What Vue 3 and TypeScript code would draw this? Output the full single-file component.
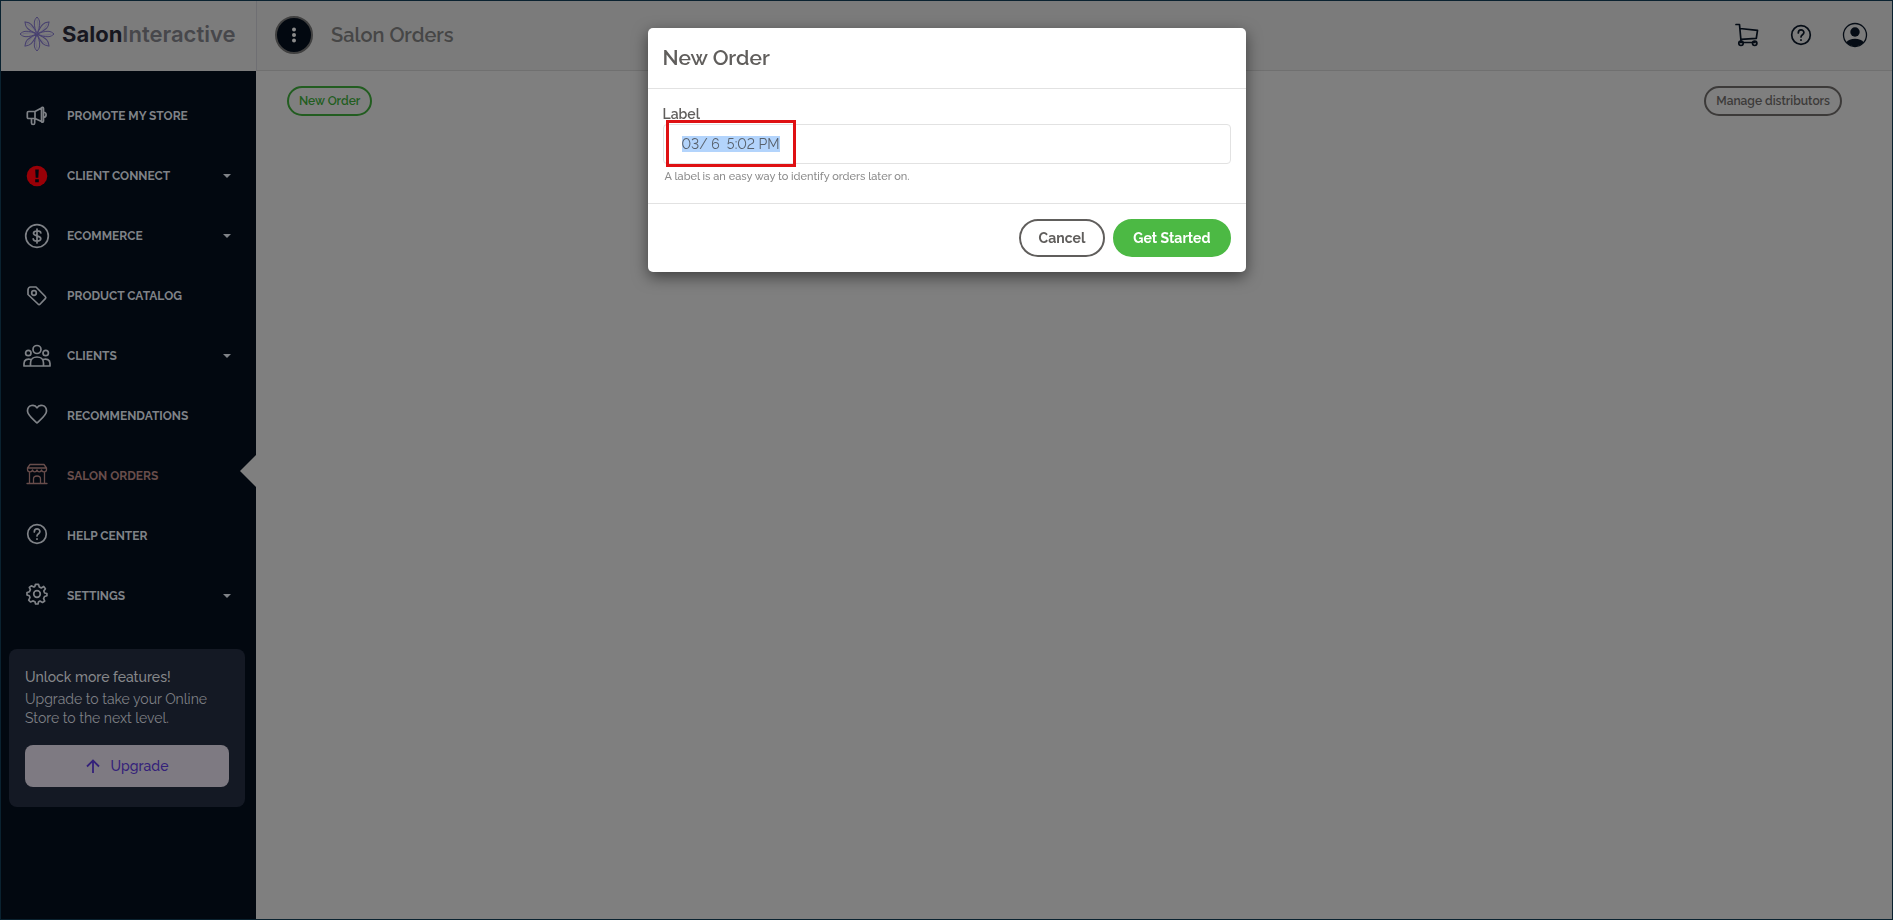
<script setup lang="ts">
import { onMounted, ref } from 'vue'

interface NavItem {
  label: string
  icon: string
  expandable?: boolean
  active?: boolean
  raised?: boolean
}

const navItems: NavItem[] = [
  { label: 'Promote my store', icon: 'megaphone' },
  { label: 'Client connect', icon: 'alert', expandable: true },
  { label: 'Ecommerce', icon: 'dollar', expandable: true },
  { label: 'Product catalog', icon: 'tag' },
  { label: 'Clients', icon: 'people', expandable: true },
  { label: 'Recommendations', icon: 'heart', raised: true },
  { label: 'Salon orders', icon: 'store', active: true, raised: true },
  { label: 'Help center', icon: 'help', raised: true },
  { label: 'Settings', icon: 'gear', expandable: true, raised: true },
]

const petals = [0, 45, 90, 135, 180, 225, 270, 315]
const orderLabel = ref('03/ 6  5:02 PM')
const labelInput = ref<HTMLInputElement | null>(null)

onMounted(() => {
  labelInput.value?.focus()
  labelInput.value?.select()
})
</script>

<template>
  <div class="app">
    <aside class="sidebar">
      <a class="brand" href="#">
        <svg class="brand-mark" viewBox="0 0 36 36" fill="none" stroke-width="1">
          <g v-for="a in petals" :key="a" :transform="`rotate(${a} 18 18)`">
            <path d="M18 18C16.500 14 15.300 11 15.300 7C15.300 4 16.800 2.500 18 1C19.200 2.500 20.700 4 20.700 7C20.700 11 20 13 18 18Z" stroke="#48416f" />
            <path d="M18 18C20 15 19.500 10 18 3.500" stroke="#5c5682" stroke-width=".5" />
          </g>
        </svg>
        <span class="brand-name"><b>Salon</b>Interactive</span>
      </a>

      <nav class="nav">
        <a v-for="item in navItems" :key="item.label" class="nav-item" :class="{ active: item.active }" href="#">
          <span class="nav-icon" :class="{ raised: item.raised }">
            <svg v-if="item.icon === 'megaphone'" width="22" height="22" viewBox="0 0 22 22" class="line">
              <path d="M2.500 6.500H9L15.500 3V16.500L9 13.500H2.500C1.700 13.500 1.300 13 1.300 12.300V7.700C1.300 7 1.700 6.500 2.500 6.500ZM9 6.500V13.500M5.500 13.500V18C5.500 20 8.700 20 8.700 18V13.500M15.500 3C16 2 17.500 2 17.500 3.500V16C17.500 17.500 16 17.500 15.500 16.500M17.500 7C21 7.500 21 12 17.500 12.500" />
            </svg>
            <svg v-else-if="item.icon === 'alert'" width="22" height="22" viewBox="0 0 22 22">
              <circle cx="11" cy="11" r="10.300" fill="#990007" />
              <path d="M9.200 4.500H12.800L12.300 12.800H9.700ZM9.200 14.200H12.800V17.200H9.200Z" fill="#02070f" />
            </svg>
            <svg v-else-if="item.icon === 'dollar'" width="26" height="26" viewBox="0 0 26 26" class="line">
              <circle cx="13" cy="13" r="11.300" />
              <path d="M13 6V20M16.800 10C16.500 7.300 9.500 7.200 9.500 10.300C9.500 13.500 16.800 12.200 16.800 15.700C16.800 19 9.500 18.800 9.200 15.800" />
            </svg>
            <svg v-else-if="item.icon === 'tag'" width="22" height="22" viewBox="0 0 22 22" class="line">
              <path d="M2 5V9.500L12 19C12.700 19.800 13.500 19.800 14.200 19L19.300 13.700C20 13 20 12.300 19.300 11.500L10 2H4.500C3 2 2 3.500 2 5Z" />
              <circle cx="8" cy="8" r="2.300" />
            </svg>
            <svg v-else-if="item.icon === 'people'" width="28" height="24" viewBox="0 0 28 24" class="line">
              <circle cx="14" cy="5.500" r="4" />
              <circle cx="5.300" cy="9" r="2.700" />
              <circle cx="22.700" cy="9" r="2.700" />
              <path d="M7.500 22V19C7.500 11 20.500 11 20.500 19V22M7.500 22H20.500M7.500 22H1V19.500C1 15.500 4.500 14.500 8 15.500M20.500 22H27V19.500C27 15.500 23.500 14.500 20 15.500" />
            </svg>
            <svg v-else-if="item.icon === 'heart'" width="22" height="22" viewBox="0 0 22 22" class="line">
              <path d="M11 4.800C8.700 .8 1.500 1.700 1.500 8C1.500 12.300 7.500 16.500 11 20C14.500 16.500 20.500 12.300 20.500 8C20.500 1.700 13.300 .8 11 4.800Z" />
            </svg>
            <svg v-else-if="item.icon === 'store'" width="22" height="22" viewBox="0 0 22 22" class="line thin">
              <path d="M4 1.500H18L20.500 5V6.500C20.500 9.500 16 9.500 15.500 7C15 9.500 11.500 9.500 11 7C10.500 9.500 7 9.500 6.500 7C6 9.500 1.500 9.500 1.500 6.500V5ZM1.500 5H20.500M3.500 9V20.500M18.500 9V20.500M1 20.500H21M7.500 20.500V16C7.500 12 14.500 12 14.500 16V20.500" />
            </svg>
            <svg v-else-if="item.icon === 'help'" width="22" height="22" viewBox="0 0 22 22" class="line">
              <circle cx="11" cy="11" r="9.300" />
              <path d="M8.300 9C8.300 4.800 13.900 5.200 13.900 8.600C13.900 10.700 11 10.800 11 13M11 15.800V16.200" />
            </svg>
            <svg v-else width="24" height="24" viewBox="0 0 24 24" class="line">
              <circle cx="12" cy="12" r="3.300" />
              <path d="M10.500 2.300H13.500L14.300 5L16.300 5.900L18.700 4.500L20.400 6.700L18.800 9L19.600 11L21.900 11.500V13.800L19.500 14.500L18.600 16.600L19.700 19L17.500 20.500L15 19.100L13.600 19.800L13 22H10.600L10 19.700L7.800 18.900L5.500 20L3.700 18.200L5 15.500L4.300 13.700L2 13V10.500L4.500 9.700L5.400 7.700L4.300 5.400L6.300 3.800L8.800 5L9.800 4.600Z" />
            </svg>
          </span>
          <span class="nav-label">{{ item.label }}</span>
          <span v-if="item.expandable" class="caret"></span>
          <span v-if="item.active" class="pointer"></span>
        </a>
      </nav>

      <section class="upgrade">
        <p class="upgrade-title">Unlock more features!</p>
        <p class="upgrade-text">Upgrade to take your Online Store to the next level.</p>
        <button class="upgrade-button" type="button">
          <svg width="14" height="14" viewBox="0 0 14 14" fill="none" stroke="currentColor" stroke-width="1.800">
            <path d="M7 14V1.500M1 7.500L7 1.500L13 7.500" />
          </svg>
          Upgrade
        </button>
      </section>
    </aside>

    <main class="main">
      <header class="topbar">
        <button class="menu-button" type="button" aria-label="More options">
          <svg width="6" height="16" viewBox="0 0 6 16" fill="#8b8b8b">
            <circle cx="3" cy="2.500" r="2" /><circle cx="3" cy="8" r="2" /><circle cx="3" cy="13.500" r="2" />
          </svg>
        </button>
        <h1 class="page-title">Salon Orders</h1>
        <div class="actions">
          <button class="icon-button" type="button" aria-label="Cart">
            <svg width="24" height="24" viewBox="0 0 24 24" class="line">
              <path d="M1 1.500H4.500L6 18M5 5.500L22.500 7.300L21.300 15.300L5.800 16.300M5.500 19.500H20" />
              <circle cx="6" cy="20.300" r="2.200" /><circle cx="19.700" cy="20.300" r="2.200" />
            </svg>
          </button>
          <button class="icon-button" type="button" aria-label="Help">
            <svg width="22" height="22" viewBox="0 0 22 22" class="line">
              <circle cx="11" cy="11" r="9.300" />
              <path d="M8.300 9C8.300 4.800 13.900 5.200 13.900 8.600C13.900 10.700 11 10.800 11 13M11 15.800V16.200" />
            </svg>
          </button>
          <button class="icon-button" type="button" aria-label="Account">
            <svg width="26" height="26" viewBox="0 0 26 26">
              <circle cx="13" cy="13" r="11.500" fill="none" stroke="currentColor" stroke-width="1.300" />
              <circle cx="13" cy="10" r="4.700" fill="currentColor" />
              <path d="M4.300 20.300C7 15.600 19 15.600 21.700 20.300C18 25.700 8 25.700 4.300 20.300Z" fill="currentColor" />
            </svg>
          </button>
        </div>
      </header>
      <div class="toolbar">
        <button class="pill pill-green" type="button">New Order</button>
        <button class="pill" type="button">Manage distributors</button>
      </div>
    </main>

    <div class="modal-layer">
      <form class="modal" role="dialog" aria-labelledby="modal-title" @submit.prevent>
        <h2 id="modal-title" class="modal-header">New Order</h2>
        <div class="modal-body">
          <label class="field-label" for="order-label">Label</label>
          <div class="field">
            <input id="order-label" ref="labelInput" v-model="orderLabel" class="field-input" type="text" />
            <span class="highlight"></span>
          </div>
          <p class="hint">A label is an easy way to identify orders later on.</p>
        </div>
        <div class="modal-footer">
          <button class="button outline" type="button">Cancel</button>
          <button class="button solid" type="submit">Get Started</button>
        </div>
      </form>
    </div>
  </div>
</template>

<style>
body {
  margin: 0;
}
</style>

<style scoped>
* {
  box-sizing: border-box;
}
.app {
  display: flex;
  min-height: 100vh;
  border: 1px solid #0a2230;
  background: #7f7f7f;
  font-family: Raleway, Lato, "Open Sans", sans-serif;
  font-size: 14px;
  font-variant-numeric: lining-nums;
}
button {
  font: inherit;
  cursor: pointer;
}
a {
  text-decoration: none;
  color: inherit;
}
svg {
  display: block;
}
.line {
  fill: none;
  stroke: currentColor;
  stroke-width: 1.7;
  stroke-linejoin: round;
  stroke-linecap: round;
}
.thin {
  stroke-width: 1.3;
}
.sidebar {
  flex: none;
  width: 255px;
  background: #020810;
}
.brand {
  display: flex;
  align-items: center;
  gap: 7px;
  height: 70px;
  padding: 0 18px 4px;
  background: #7c7c7c;
}
.brand-mark {
  flex: none;
  width: 36px;
  height: 36px;
}
.brand-name {
  font-family: Inter, sans-serif;
  font-size: 22px;
  font-weight: 600;
  color: #47474b;
}
.brand-name b {
  font-weight: 700;
  color: #17171f;
}
.nav {
  padding-top: 15px;
}
.nav-item {
  position: relative;
  display: flex;
  align-items: center;
  height: 60px;
  padding: 0 25px 0 20px;
  color: #7f8287;
}
.nav-icon {
  display: flex;
  justify-content: center;
  width: 32px;
  margin-right: 14px;
}
.nav-icon.raised {
  padding-bottom: 4px;
}
.nav-label {
  flex: 1;
  font-size: 12px;
  font-weight: 700;
  text-transform: uppercase;
}
.nav-item.active {
  color: #684d4b;
}
.caret {
  border: 4px solid transparent;
  border-top-color: currentColor;
  border-bottom: 0;
}
.pointer {
  position: absolute;
  right: 0;
  top: 9px;
  border: 16px solid transparent;
  border-right-color: #7f7f7f;
  border-left: 0;
}
.upgrade {
  margin: 23px 11px 0 8px;
  padding: 19px 16px 20px;
  border-radius: 8px;
  background: #141924;
  color: #7f8084;
}
.upgrade p {
  margin: 0;
  line-height: 19px;
}
.upgrade .upgrade-title {
  margin-bottom: 3px;
  font-weight: 500;
  color: #86878a;
}
.upgrade-button {
  display: flex;
  align-items: center;
  justify-content: center;
  gap: 11px;
  width: 100%;
  height: 42px;
  margin-top: 17px;
  border: 0;
  border-radius: 8px;
  background: #7e7a82;
  color: #34217a;
  font-weight: 500;
}
.main {
  flex: 1;
  min-width: 0;
}
.topbar {
  display: flex;
  align-items: center;
  height: 70px;
  padding: 0 24px 2px 18px;
  border-left: 1px solid #6f6f73;
  border-bottom: 1px solid #707070;
  background: #7b7b7b;
}
.menu-button {
  display: flex;
  align-items: center;
  justify-content: center;
  width: 38px;
  height: 38px;
  padding: 0;
  border: 2px solid #404040;
  border-radius: 50%;
  background: #020810;
}
.page-title {
  margin: 0 0 0 18px;
  font-size: 20px;
  font-weight: 600;
  color: #464646;
}
.actions {
  display: flex;
  gap: 28px;
  margin-left: auto;
}
.icon-button {
  display: flex;
  align-items: center;
  justify-content: center;
  width: 26px;
  height: 26px;
  padding: 0;
  border: 0;
  background: none;
  color: #050c15;
}
.toolbar {
  display: flex;
  justify-content: space-between;
  padding: 15px 50px 0 31px;
}
.pill {
  height: 30px;
  padding: 0 10px;
  border: 2px solid #3c3a39;
  border-radius: 15px;
  background: transparent;
  color: #3c3a39;
  font-size: 12px;
  font-weight: 600;
}
.pill-green {
  border-color: #225d20;
  color: #225d20;
}
.modal-layer {
  position: fixed;
  inset: 0;
  display: flex;
  align-items: flex-start;
  justify-content: center;
  padding-top: 28px;
}
.modal {
  width: 598px;
  border-radius: 5px;
  background: #fff;
  box-shadow: 0 5px 15px rgba(0, 0, 0, 0.5);
  color: #605e5c;
}
.modal-header {
  margin: 0;
  padding: 18px 15px;
  border-bottom: 1px solid #e2e2e2;
  font-size: 21px;
  font-weight: 600;
  line-height: 24px;
}
.modal-body {
  padding: 16px 15px 18px;
  border-bottom: 1px solid #e2e2e2;
}
.field-label {
  display: block;
  margin-bottom: 1px;
  font-weight: 600;
  line-height: 18px;
}
.field {
  position: relative;
}
.field-input {
  display: block;
  width: 100%;
  height: 40px;
  padding: 0 18px;
  border: 1px solid #e2e2e2;
  border-radius: 4px;
  outline: 0;
  background: #fff;
  color: #605e5c;
  font: inherit;
  font-variant-numeric: lining-nums;
}
.field-input::selection {
  background: #b3d4fc;
  color: #58616c;
}
.highlight {
  position: absolute;
  left: 3px;
  top: -4px;
  width: 130px;
  height: 47px;
  border: 3px solid #df1013;
  pointer-events: none;
}
.hint {
  margin: 4px 2px 0;
  font-size: 11px;
  font-weight: 500;
  line-height: 17px;
  color: #8c8c8c;
}
.modal-footer {
  display: flex;
  justify-content: flex-end;
  gap: 8px;
  padding: 15px;
}
.button {
  height: 38px;
  padding: 0 18px;
  border: 2px solid #605e5c;
  border-radius: 19px;
  font-weight: 700;
}
.outline {
  background: #fff;
  color: #605e5c;
}
.solid {
  border-color: #4cb944;
  background: #4cb944;
  color: #fff;
}
</style>
